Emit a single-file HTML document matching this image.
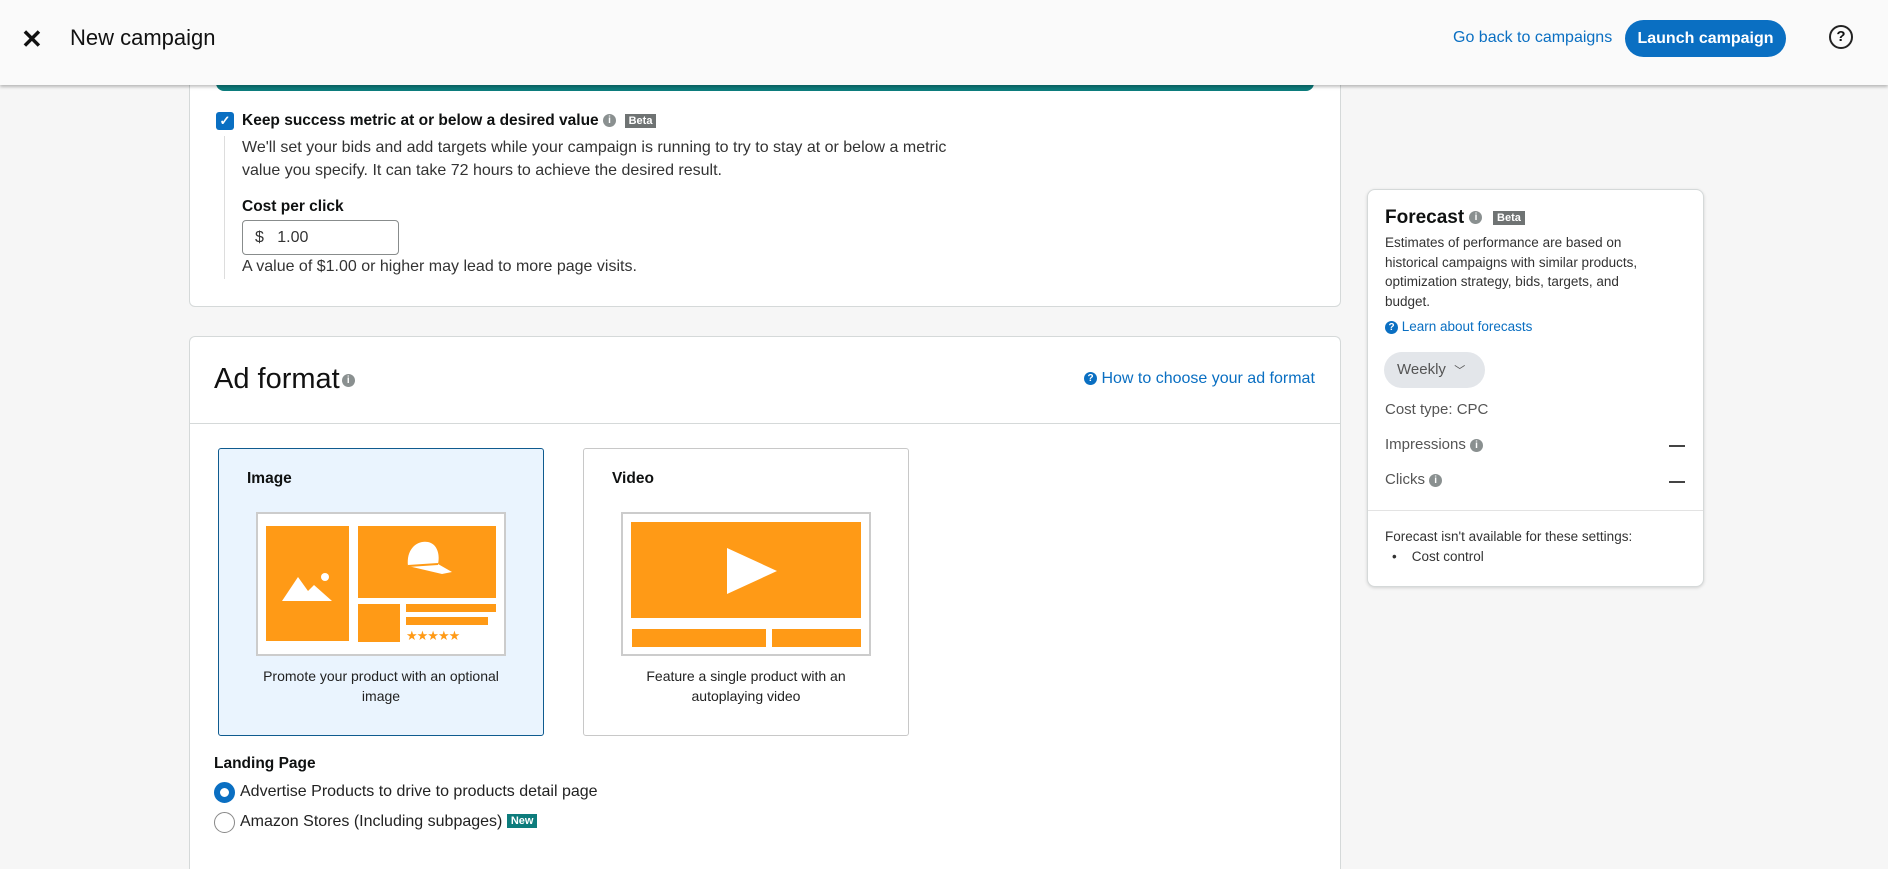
<!DOCTYPE html>
<html><head><meta charset="utf-8"><style>
*{box-sizing:border-box;margin:0;padding:0}
html,body{width:1888px;height:869px;overflow:hidden}
body{background:#f6f6f6;font-family:"Liberation Sans",Arial,sans-serif;color:#0f1111;position:relative}
.a{position:absolute}
.hdr{left:0;top:0;width:1888px;height:85px;background:#fafafa;box-shadow:0 2px 3px rgba(0,0,0,.25);z-index:5}
.card{background:#fff;border:1px solid #d5d9d9;border-radius:6px}
.t{font-size:16px;color:#333}
.info{display:inline-block;width:13px;height:13px;border-radius:50%;background:#8a9090;color:#fff;font-size:10px;font-weight:bold;text-align:center;line-height:13px;vertical-align:middle}
.beta{display:inline-block;background:#6f7373;color:#fff;font-size:11px;font-weight:bold;padding:1px 4px;vertical-align:middle}
.lnk{color:#0a6fc2}
.q{display:inline-block;width:13px;height:13px;border-radius:50%;background:#0a6fc2;color:#fff;font-size:10px;font-weight:bold;text-align:center;line-height:13px;vertical-align:middle}
.o{background:#ff9a16}
</style></head><body>
<div class="a hdr">
  <div class="a" style="left:21px;top:24px;font-size:26px;font-weight:bold;color:#111">✕</div>
  <div class="a" style="left:70px;top:25px;font-size:22px;color:#111">New campaign</div>
  <div class="a lnk" style="left:1453px;top:29px;font-size:16px">Go back to campaigns</div>
  <div class="a" style="left:1625px;top:20px;width:161px;height:37px;border-radius:19px;background:#0a6fc2;color:#fff;font-size:16px;font-weight:bold;text-align:center;line-height:37px">Launch campaign</div>
  <div class="a" style="left:1829px;top:25px;width:24px;height:24px;border:2.5px solid #222;border-radius:50%;text-align:center;font-size:15px;font-weight:bold;line-height:19px">?</div>
</div>

<div class="a card" style="left:189px;top:40px;width:1152px;height:267px"></div>
<div class="a" style="left:216px;top:80px;width:1098px;height:11px;background:#0d7c7c;border-radius:0 0 8px 8px"></div>
<div class="a" style="left:216px;top:112px;width:18px;height:18px;border-radius:3px;background:#0a6fc2;color:#fff;font-size:13px;text-align:center;line-height:18px;font-weight:bold">✓</div>
<div class="a" style="left:242px;top:112px;font-size:15.5px;font-weight:bold">Keep success metric at or below a desired value <span class="info">i</span> &nbsp;<span class="beta">Beta</span></div>
<div class="a" style="left:224px;top:136px;width:1px;height:143px;background:#ddd"></div>
<div class="a t" style="left:242px;top:136px;line-height:23px;width:800px">We'll set your bids and add targets while your campaign is running to try to stay at or below a metric<br>value you specify. It can take 72 hours to achieve the desired result.</div>
<div class="a" style="left:242px;top:198px;font-size:15.5px;font-weight:bold">Cost per click</div>
<div class="a" style="left:242px;top:220px;width:157px;height:35px;border:1px solid #888c8c;border-radius:4px;background:#fff;font-size:16px;line-height:33px;padding-left:12px;color:#333">$ &nbsp;&nbsp;1.00</div>
<div class="a t" style="left:242px;top:258px">A value of $1.00 or higher may lead to more page visits.</div>

<div class="a card" style="left:189px;top:336px;width:1152px;height:533px;border-bottom:none;border-radius:6px 6px 0 0"></div>
<div class="a" style="left:214px;top:363px;font-size:29px;color:#111">Ad format <span class="info" style="margin-left:-6px">i</span></div>
<div class="a lnk" style="left:1084px;top:370px;font-size:16px"><span class="q">?</span> How to choose your ad format</div>
<div class="a" style="left:190px;top:423px;width:1150px;height:1px;background:#d5d9d9"></div>

<div class="a" style="left:218px;top:448px;width:326px;height:288px;background:#eaf4fe;border:1px solid #0f5b8f;border-radius:3px"></div>
<div class="a" style="left:247px;top:470px;font-size:15.5px;font-weight:bold">Image</div>
<div class="a" style="left:256px;top:512px;width:250px;height:144px;background:#fff;border:2px solid #ccc"></div>
<div class="a o" style="left:266px;top:526px;width:83px;height:115px"></div>
<svg class="a" style="left:280px;top:565px" width="56" height="40"><polygon points="2,36 18,12 28,26 34,20 52,36" fill="#fff"/><circle cx="45" cy="12" r="4" fill="#fff"/></svg>
<div class="a o" style="left:358px;top:526px;width:138px;height:72px"></div>
<svg class="a" style="left:398px;top:534px" width="60" height="50"><path d="M10 32 C8 14 20 6 30 8 C40 10 42 22 40 30 L54 38 L44 40 Z" fill="#fff"/><path d="M10 32 L40 30" stroke="#ff9a16" stroke-width="2"/></svg>
<div class="a o" style="left:358px;top:604px;width:42px;height:38px"></div>
<div class="a o" style="left:406px;top:604px;width:90px;height:8px"></div>
<div class="a o" style="left:406px;top:617px;width:82px;height:8px"></div>
<div class="a" style="left:406px;top:628px;font-size:13px;color:#ff9a16;letter-spacing:-1px">★★★★★</div>
<div class="a" style="left:218px;top:666px;width:326px;text-align:center;font-size:14px;line-height:20px;color:#222">Promote your product with an optional<br>image</div>

<div class="a" style="left:583px;top:448px;width:326px;height:288px;background:#fff;border:1px solid #c8c8c8;border-radius:3px"></div>
<div class="a" style="left:612px;top:470px;font-size:15.5px;font-weight:bold">Video</div>
<div class="a" style="left:621px;top:512px;width:250px;height:144px;background:#fff;border:2px solid #ccc"></div>
<div class="a o" style="left:631px;top:522px;width:230px;height:96px"></div>
<svg class="a" style="left:725px;top:546px" width="55" height="50"><polygon points="2,2 52,25 2,48" fill="#fff"/></svg>
<div class="a o" style="left:632px;top:629px;width:134px;height:18px"></div>
<div class="a o" style="left:772px;top:629px;width:89px;height:18px"></div>
<div class="a" style="left:583px;top:666px;width:326px;text-align:center;font-size:14px;line-height:20px;color:#222">Feature a single product with an<br>autoplaying video</div>

<div class="a" style="left:214px;top:755px;font-size:15.5px;font-weight:bold">Landing Page</div>
<div class="a" style="left:214px;top:782px;width:21px;height:21px;border-radius:50%;border:6px solid #0a6fc2;background:#fff"></div>
<div class="a t" style="left:240px;top:783px;color:#222">Advertise Products to drive to products detail page</div>
<div class="a" style="left:214px;top:812px;width:21px;height:21px;border-radius:50%;border:1px solid #888;background:#fff"></div>
<div class="a t" style="left:240px;top:813px;color:#222">Amazon Stores (Including subpages) <span style="background:#0d7c7c;color:#fff;font-size:11px;font-weight:bold;padding:1px 4px;vertical-align:2px">New</span></div>

<div class="a card" style="left:1367px;top:189px;width:337px;height:398px;border-radius:8px;box-shadow:0 1px 3px rgba(0,0,0,.15)"></div>
<div class="a" style="left:1385px;top:207px;font-size:19px;font-weight:bold">Forecast <span class="info">i</span> &nbsp;<span class="beta">Beta</span></div>
<div class="a" style="left:1385px;top:233px;font-size:13.5px;line-height:19.5px;color:#333;width:270px">Estimates of performance are based on historical campaigns with similar products, optimization strategy, bids, targets, and budget.</div>
<div class="a lnk" style="left:1385px;top:319px;font-size:13.5px"><span class="q">?</span> Learn about forecasts</div>
<div class="a" style="left:1384px;top:352px;width:101px;height:36px;border-radius:18px;background:#e3e6ea;color:#555;font-size:15px;line-height:36px;padding-left:13px">Weekly &nbsp;<span style="font-size:11px">﹀</span></div>
<div class="a" style="left:1385px;top:401px;font-size:15px;color:#555">Cost type: CPC</div>
<div class="a" style="left:1385px;top:436px;font-size:15px;color:#555">Impressions <span class="info">i</span></div>
<div class="a" style="left:1385px;top:471px;font-size:15px;color:#555">Clicks <span class="info">i</span></div>
<div class="a" style="left:1669px;top:445px;width:16px;height:2px;background:#444"></div>
<div class="a" style="left:1669px;top:481px;width:16px;height:2px;background:#444"></div>
<div class="a" style="left:1368px;top:510px;width:335px;height:1px;background:#e3e3e3"></div>
<div class="a" style="left:1385px;top:529px;font-size:13.5px;color:#333">Forecast isn't available for these settings:</div>
<div class="a" style="left:1392px;top:549px;font-size:13.5px;color:#333">•&nbsp;&nbsp;&nbsp; Cost control</div>
</body></html>
